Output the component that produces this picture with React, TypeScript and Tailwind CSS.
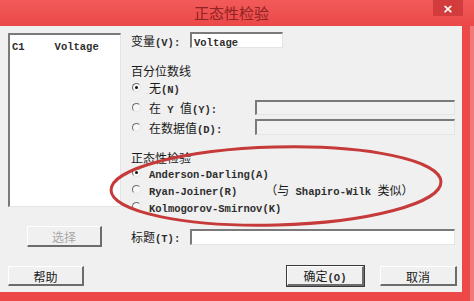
import React from "react";

const isCJK = (c: string) => /[\u3000-\u9fff\uff00-\uffef]/.test(c);

function T({ s, className = "" }: { s: string; className?: string }) {
  const runs: { cjk: boolean; t: string }[] = [];
  for (const ch of s) {
    const c = isCJK(ch);
    const last = runs[runs.length - 1];
    if (last && last.cjk === c) last.t += ch;
    else runs.push({ cjk: c, t: ch });
  }
  return (
    <span className={"whitespace-pre leading-none " + className}>
      {runs.map((r, i) =>
        r.cjk ? (
          <span key={i} className="text-[12px] [font-family:'Noto_Sans_CJK_SC',sans-serif]">
            {r.t}
          </span>
        ) : (
          <span key={i} className="text-[10.5px] font-bold text-[#2e2e2e] [font-family:'Liberation_Mono',monospace]">
            {r.t}
          </span>
        )
      )}
    </span>
  );
}

function Radio({ on = false }: { on?: boolean }) {
  return (
    <div className="w-[9px] h-[9px] rounded-full border border-t-[#6e6e6e] border-l-[#6e6e6e] border-r-[#e6e6e6] border-b-[#e6e6e6] bg-[#f7f7f7] flex items-center justify-center">
      {on && <div className="w-[3px] h-[3px] rounded-full bg-[#111]" />}
    </div>
  );
}

function RadioRow({ label, on = false, h }: { label: string; on?: boolean; h: string }) {
  return (
    <div className={"flex items-center " + h}>
      <div className="ml-[1px]">
        <Radio on={on} />
      </div>
      <T s={label} className="ml-[8px] text-[#1a1a1a]" />
    </div>
  );
}

function Sunken({ className = "", children }: { className?: string; children?: React.ReactNode }) {
  return (
    <div
      className={
        "border-t-2 border-l-2 border-r border-b border-t-[#7a7a7a] border-l-[#7a7a7a] border-r-[#e4e4e4] border-b-[#e4e4e4] " +
        className
      }
    >
      {children}
    </div>
  );
}

function Btn({ label, className = "", disabled = false, def = false }: { label: string; className?: string; disabled?: boolean; def?: boolean }) {
  return (
    <div
      className={
        "flex items-center justify-center bg-[#f0f0f0] border-t border-l border-r-2 border-b-2 border-t-[#ffffff] border-l-[#ffffff] border-r-[#6c6c6c] border-b-[#6c6c6c] " +
        (def ? "outline outline-1 outline-[#3a3a3a] " : "") +
        className
      }
    >
      <T s={label} className={disabled ? "text-[#a8a8a8]" : "text-[#1a1a1a]"} />
    </div>
  );
}

export default function App() {
  return (
    <div className="relative w-[474px] h-[301px] bg-[#ec4848] flex flex-col overflow-hidden">
      {/* title bar */}
      <div className="h-[26px] shrink-0 flex items-start bg-gradient-to-b from-[#f25a5a] to-[#ec4848]">
        <div className="flex-1 flex justify-center pl-[30px] pt-[3px]">
          <span className="text-[15px] leading-[20px] text-[#8e2323] [font-family:'Noto_Sans_CJK_SC',sans-serif]">
            正态性检验
          </span>
        </div>
        <div className="w-[30px] h-[16px] mr-[11px] bg-[#d23c3c] flex items-center justify-center text-white text-[13px] leading-none font-bold [font-family:'DejaVu_Sans',sans-serif]">
          ×
        </div>
      </div>

      <div className="flex flex-1">
        {/* body */}
        <div className="w-[462px] h-[266px] bg-[#f0f0f0] flex flex-col pt-[6px]">
          <div className="flex items-start">
            {/* list box */}
            <Sunken className="ml-[8px] mt-[1px] w-[113px] h-[174px] bg-white">
              <div className="flex items-center h-[16px] mt-[1px] text-[#111]">
                <T s="C1" className="ml-[2px]" />
                <T s="Voltage" className="ml-[30px]" />
              </div>
            </Sunken>

            {/* form */}
            <div className="ml-[10px] w-[324px] flex flex-col">
              <div className="flex items-center h-[16px]">
                <T s="变量(V):" className="w-[59px] text-[#1a1a1a]" />
                <Sunken className="w-[93px] h-[16px] bg-white flex items-center">
                  <T s="Voltage" className="ml-[2px] text-[#111]" />
                </Sunken>
              </div>

              <div className="mt-[15px] h-[14px] flex items-center">
                <T s="百分位数线" className="text-[#1a1a1a]" />
              </div>
              <RadioRow label="无(N)" on h="h-[20px]" />
              <div className="flex items-center justify-between h-[20px]">
                <RadioRow label="在 Y 值(Y):" h="h-[20px]" />
                <Sunken className="w-[200px] h-[15px] bg-[#f2f2f2]" />
              </div>
              <div className="flex items-center justify-between h-[20px]">
                <RadioRow label="在数据值(D):" h="h-[20px]" />
                <Sunken className="w-[200px] h-[16px] bg-[#f2f2f2]" />
              </div>

              <div className="mt-[13px] h-[14px] flex items-center">
                <T s="正态性检验" className="text-[#1a1a1a]" />
              </div>
              <RadioRow label="Anderson-Darling(A)" on h="h-[17px]" />
              <div className="flex items-center h-[17px]">
                <RadioRow label="Ryan-Joiner(R)" h="h-[17px]" />
                <T s="（与 Shapiro-Wilk 类似）" className="ml-[28px] text-[#1a1a1a]" />
              </div>
              <RadioRow label="Kolmogorov-Smirnov(K)" h="h-[17px]" />
            </div>
          </div>

          <div className="mt-[11px] flex items-center">
            <Btn label="选择" disabled className="ml-[27px] w-[75px] h-[21px]" />
            <T s="标题(T):" className="ml-[29px] w-[59px] text-[#1a1a1a]" />
            <Sunken className="w-[265px] h-[16px] bg-white" />
          </div>

          <div className="mt-[19px] flex items-center">
            <Btn label="帮助" className="ml-[8px] w-[76px] h-[20px]" />
            <Btn label="确定(O)" def className="ml-[203px] w-[77px] h-[20px]" />
            <Btn label="取消" className="ml-[16px] w-[77px] h-[20px]" />
          </div>
        </div>
        <div className="w-[8px]" />
        <div className="w-[4px] bg-[#f07a7a]" />
      </div>

      {/* hand-drawn annotation ellipse */}
      <svg
        className="absolute left-0 top-0 pointer-events-none"
        width="474"
        height="301"
        viewBox="0 0 474 301"
      >
        <ellipse
          cx="276"
          cy="186"
          rx="165"
          ry="39"
          fill="none"
          stroke="#c63a3a"
          strokeWidth="3"
          transform="rotate(-1.5 276 186)"
        />
      </svg>
    </div>
  );
}
